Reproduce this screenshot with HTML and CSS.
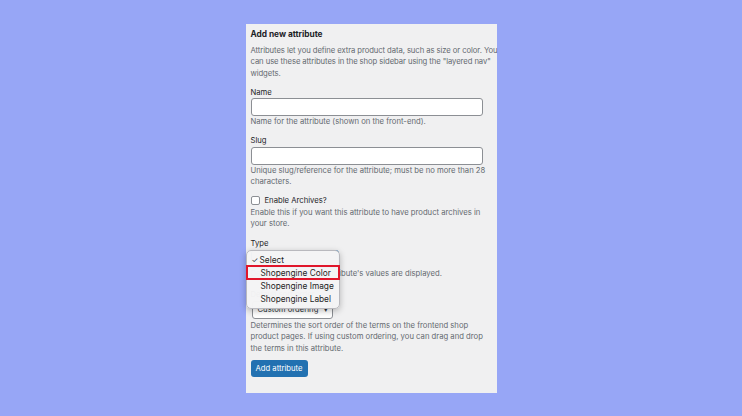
FILE: index.html
```html
<!DOCTYPE html>
<html lang="en">
<head>
<meta charset="utf-8">
<title>Add new attribute</title>
<link rel="stylesheet" href="styles.css">
</head>
<body>
<div class="stage">
  <div class="panel">
    <h2 class="title">Add new attribute</h2>
    <p class="intro">Attributes let you define extra product data, such as size or color. You can use these attributes in the shop sidebar using the "layered nav" widgets.</p>

    <div class="field">
      <label class="label">Name</label>
      <div class="input"></div>
      <p class="help">Name for the attribute (shown on the front-end).</p>
    </div>

    <div class="field">
      <label class="label">Slug</label>
      <div class="input"></div>
      <p class="help">Unique slug/reference for the attribute; must be no more than 28 characters.</p>
    </div>

    <div class="field">
      <div class="check-row"><span class="checkbox"></span><span class="check-label">Enable Archives?</span></div>
      <p class="help">Enable this if you want this attribute to have product archives in your store.</p>
    </div>

    <div class="field type-field">
      <label class="label">Type</label>
      <div class="select select-type"></div>
      <p class="help">Determines how this attribute's values are displayed.</p>
      <div class="menu">
        <div class="menu-item selected"><span class="tick">✓</span>Select</div>
        <div class="menu-item">Shopengine Color</div>
        <div class="menu-item">Shopengine Image</div>
        <div class="menu-item">Shopengine Label</div>
        <div class="highlight"></div>
      </div>
    </div>

    <div class="field order-field">
      <label class="label">Default sort order</label>
      <div class="select select-order"><span>Custom ordering</span><span class="caret">▾</span></div>
      <p class="help">Determines the sort order of the terms on the frontend shop product pages. If using custom ordering, you can drag and drop the terms in this attribute.</p>
    </div>

    <div class="button">Add attribute</div>
  </div>
</div>
</body>
</html>
```

FILE: styles.css
```css
html, body {
  margin: 0;
  padding: 0;
}
body {
  background: #97a6f6;
  font-family: Inter, "Noto Sans", "Liberation Sans", sans-serif;
  font-size: 7.7px;
  line-height: 11.5px;
  color: #1d2327;
}
.stage {
  width: 742px;
  height: 416px;
  display: flex;
  align-items: center;
  justify-content: center;
}
.panel {
  width: 251px;
  height: 369px;
  box-sizing: border-box;
  background: #f0f0f1;
  padding: 4px 0 0 5px;
}
.title {
  margin: 0;
  font-size: 8.3px;
  line-height: 12px;
  font-weight: 700;
  color: #1d2327;
}
.intro {
  margin: 5px -3px 0 0;
  color: #646970;
  letter-spacing: -0.08px;
}
.field {
  margin-top: 7.5px;
}
.label {
  display: block;
  color: #1d2327;
}
.input {
  width: 232px;
  height: 18px;
  box-sizing: border-box;
  background: #fff;
  border: 1px solid #8c8f94;
  border-radius: 3px;
}
.help {
  margin: 0;
  color: #646970;
}
.check-row {
  display: flex;
  align-items: center;
  height: 11.5px;
  gap: 5px;
}
.checkbox {
  width: 9px;
  height: 9px;
  box-sizing: border-box;
  background: #fff;
  border: 1px solid #8c8f94;
  border-radius: 2px;
}
.check-label {
  color: #1d2327;
}
.type-field {
  position: relative;
  margin-top: 8.5px;
}
.order-field {
  margin-top: 10px;
}
.select {
  height: 18px;
  box-sizing: border-box;
  background: #fff;
  border: 1px solid #8c8f94;
  border-radius: 3px;
}
.select-type {
  width: 88px;
  border-color: #2271b1;
}
.select-order {
  width: 81px;
  margin-left: 1px;
  margin-bottom: 1px;
  display: flex;
  align-items: center;
  justify-content: space-between;
  padding: 0 4px 0 5px;
  color: #2c3338;
}
.caret {
  font-size: 7px;
}
.menu {
  position: absolute;
  left: -5px;
  top: 11.75px;
  width: 94px;
  box-sizing: border-box;
  padding: 3.5px 0 2px;
  background: rgba(244, 244, 245, 0.98);
  border: 1px solid #b9b9be;
  border-radius: 5px;
  box-shadow: 0 2px 6px rgba(0, 0, 0, 0.25);
}
.menu-item {
  height: 13px;
  line-height: 13px;
  padding-left: 14px;
  font-size: 8.3px;
  font-weight: 400;
  color: #1e1e1e;
}
.menu-item.selected {
  padding-left: 5px;
}
.tick {
  display: inline-block;
  width: 8px;
  font-size: 7.5px;
}
.highlight {
  position: absolute;
  left: -1px;
  right: -1px;
  top: 14px;
  height: 15px;
  box-sizing: border-box;
  border: 2px solid #e0162b;
}
.button {
  margin-top: 6px;
  width: 57px;
  height: 17px;
  box-sizing: border-box;
  background: #2271b1;
  color: #fff;
  border-radius: 3px;
  display: flex;
  align-items: center;
  justify-content: center;
  font-size: 7.7px;
}
```
